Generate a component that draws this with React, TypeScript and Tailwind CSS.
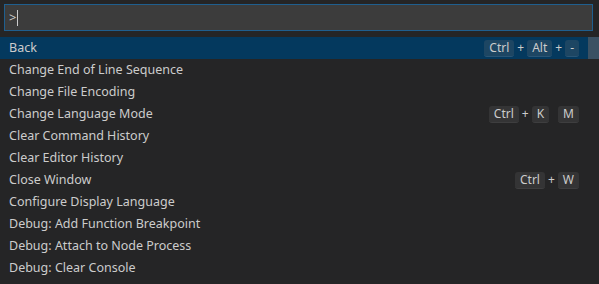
import React from "react";

type Row = { label: string; keys?: string[][] };

const rows: Row[] = [
  { label: "Back", keys: [["Ctrl", "Alt", "-"]] },
  { label: "Change End of Line Sequence" },
  { label: "Change File Encoding" },
  { label: "Change Language Mode", keys: [["Ctrl", "K"], ["M"]] },
  { label: "Clear Command History" },
  { label: "Clear Editor History" },
  { label: "Close Window", keys: [["Ctrl", "W"]] },
  { label: "Configure Display Language" },
  { label: "Debug: Add Function Breakpoint" },
  { label: "Debug: Attach to Node Process" },
  { label: "Debug: Clear Console" },
];

function Key({ k, sel }: { k: string; sel: boolean }) {
  return (
    <span
      className={
        "inline-flex h-[17px] items-center rounded-[3px] border-b px-[5px] text-[12px] leading-none text-[#cccccc] " +
        (sel ? "bg-[#1d4663] border-[#2a5575]" : "bg-[#343435] border-[#3e3e3f]")
      }
    >
      {k}
    </span>
  );
}

export default function App() {
  return (
    <div
      className="h-[284px] w-[599px] overflow-hidden bg-[#252526] text-[12.5px] text-[#cccccc]"
      style={{ fontFamily: '"Noto Sans", "Open Sans", sans-serif' }}
    >
      <div className="px-[4px] pt-[4px]">
        <div className="flex h-[27px] w-[589px] items-center border border-[#1f5f8f] bg-[#3c3c3c] pl-[4px]">
          <span className="text-[13px] text-[#cccccc]">&gt;</span>
          <span className="ml-[1px] h-[16px] w-px bg-[#cccccc]" />
        </div>
      </div>
      <div className="relative mt-[6px]">
        {rows.map((r, i) => {
          const sel = i === 0;
          return (
            <div
              key={r.label}
              className={
                "flex h-[22px] items-center justify-between pl-[9px] pr-[20px] " +
                (sel ? "bg-[#04395e]" : "")
              }
            >
              <span className="whitespace-nowrap">{r.label}</span>
              {r.keys && (
                <span className="flex items-center gap-[9px]">
                  {r.keys.map((chord, ci) => (
                    <span key={ci} className="flex items-center gap-[3px]">
                      {chord.map((k, ki) => (
                        <React.Fragment key={ki}>
                          {ki > 0 && <span className="text-[12px] text-[#cccccc]">+</span>}
                          <Key k={k} sel={sel} />
                        </React.Fragment>
                      ))}
                    </span>
                  ))}
                </span>
              )}
            </div>
          );
        })}
        <div className="absolute right-0 top-0 h-[22px] w-[11px] bg-[#3b5163]" />
      </div>
    </div>
  );
}
